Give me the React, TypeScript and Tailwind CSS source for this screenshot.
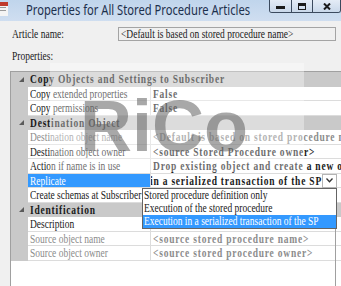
import React from 'react';

type Row =
  | { kind: 'cat'; label: string }
  | {
      kind: 'prop';
      name: string;
      value: string;
      nameGray?: boolean;
      valueGray?: boolean;
      valueBold?: boolean;
      selected?: boolean;
    };

const rows: Row[] = [
  { kind: 'cat', label: 'Copy Objects and Settings to Subscriber' },
  { kind: 'prop', name: 'Copy extended properties', value: 'False', valueBold: true },
  { kind: 'prop', name: 'Copy permissions', value: 'False', valueBold: true },
  { kind: 'cat', label: 'Destination Object' },
  {
    kind: 'prop',
    name: 'Destination object name',
    value: '<Default is based on stored procedure name>',
    nameGray: true,
    valueGray: true,
    valueBold: true,
  },
  { kind: 'prop', name: 'Destination object owner', value: '<source Stored Procedure owner>', valueBold: true },
  { kind: 'prop', name: 'Action if name is in use', value: 'Drop existing object and create a new one', valueBold: true },
  { kind: 'prop', name: 'Replicate', value: '', selected: true },
  { kind: 'prop', name: 'Create schemas at Subscriber', value: 'True', valueBold: true },
  { kind: 'cat', label: 'Identification' },
  { kind: 'prop', name: 'Description', value: '' },
  {
    kind: 'prop',
    name: 'Source object name',
    value: '<source stored procedure name>',
    nameGray: true,
    valueGray: true,
    valueBold: true,
  },
  {
    kind: 'prop',
    name: 'Source object owner',
    value: '<source stored procedure owner>',
    nameGray: true,
    valueGray: true,
    valueBold: true,
  },
];

const options = [
  'Stored procedure definition only',
  'Execution of the stored procedure',
  'Execution in a serialized transaction of the SP',
];

// the screenshot is squeezed sideways, so text is narrowed to match
const Narrow: React.FC<{ children: React.ReactNode; className?: string }> = ({ children, className = '' }) => (
  <span className={`inline-block origin-left scale-x-[0.79] whitespace-nowrap ${className}`}>{children}</span>
);

const Expander = () => (
  <svg width="5" height="5" viewBox="0 0 5 5" className="ml-[8px]">
    <polygon points="5,0 5,5 0,5" fill="#5a5a5a" />
  </svg>
);

export default function App() {
  return (
    <div className="relative w-[341px] h-[286px] overflow-hidden bg-[#f0f0f0] flex flex-col font-['Liberation_Serif',serif] text-[12px] text-[#1a1a1a]">
      {/* Title bar */}
      <div className="h-[21px] shrink-0 flex items-start bg-gradient-to-b from-[#c0d5ec] to-[#cfdef0]">
        <svg width="8" height="14" viewBox="0 0 8 14" className="mt-[2px] shrink-0">
          <rect x="0" y="0" width="8" height="14" fill="#f4f4f4" />
          <rect x="0" y="0" width="8" height="4" fill="#c0392b" />
          <rect x="0" y="5" width="6" height="1" fill="#9a9a9a" />
          <rect x="0" y="8" width="6" height="1" fill="#9a9a9a" />
        </svg>
        <div className="ml-[18px] w-[236px] shrink-0 h-[19px] flex items-center font-['Noto_Sans',sans-serif] text-[15px] text-[#1c2f4c] leading-none">
          <span className="inline-block origin-left scale-x-[0.745] whitespace-nowrap">
            Properties for All Stored Procedure Articles
          </span>
        </div>
        <div className="flex-1" />
        <div className="flex shrink-0 h-[13px] border border-t-0 border-[#3b4a5e] rounded-b-[3px] overflow-hidden">
          <div className="w-[22px] flex items-center justify-center bg-gradient-to-b from-[#e4ecf6] to-[#c9d8ea] border-r border-[#3b4a5e]">
            <div className="w-[9px] h-[3px] bg-[#1b1b1b] mt-[2px]" />
          </div>
          <div className="w-[21px] flex items-center justify-center bg-gradient-to-b from-[#e4ecf6] to-[#c9d8ea] border-r border-[#3b4a5e]">
            <div className="w-[8px] h-[7px] border border-t-[3px] border-[#1b1b1b]" />
          </div>
          <div className="w-[27px] flex items-center justify-center bg-gradient-to-b from-[#e4ecf6] to-[#c9d8ea]">
            <svg width="8" height="7" viewBox="0 0 8 7">
              <path d="M1 0.5 L7 6.5 M7 0.5 L1 6.5" stroke="#1b1b1b" strokeWidth="2" />
            </svg>
          </div>
        </div>
      </div>

      {/* Article name */}
      <div className="mt-[6px] flex items-center h-[14px] shrink-0">
        <div className="w-[118px] shrink-0 pl-[12px] leading-[14px]">
          <Narrow>Article name:</Narrow>
        </div>
        <div className="w-[218px] shrink-0 h-[14px] border border-[#a4a4a4] bg-[#f0f0f0] pl-[2px] leading-[12px] overflow-hidden">
          <Narrow>&lt;Default is based on stored procedure name&gt;</Narrow>
        </div>
      </div>

      <div className="mt-[9px] h-[13px] pl-[12px] leading-[13px] shrink-0">
        <Narrow>Properties:</Narrow>
      </div>

      {/* Property grid */}
      <div className="mt-[8px] ml-[10px] flex-1 flex flex-col bg-white border-l border-t border-[#a0a0a0]">
        {rows.map((r, i) =>
          r.kind === 'cat' ? (
            <div key={i} className="h-[14.5px] flex items-center bg-[#c9c9c9]">
              <div className="w-[19px] shrink-0 flex items-center">
                <Expander />
              </div>
              <Narrow className="font-bold tracking-[1px] leading-[14px]">{r.label}</Narrow>
            </div>
          ) : (
            <div key={i} className="h-[14.5px] flex">
              <div className="w-[17px] shrink-0 bg-[#c9c9c9]" />
              <div
                className={`w-[123px] shrink-0 pl-[2px] border-b border-r border-[#dcdcdc] leading-[14px] overflow-hidden ${
                  r.selected ? 'bg-[#3399ff] text-white' : r.nameGray ? 'text-[#8c8c8c]' : ''
                }`}
              >
                <Narrow>{r.name}</Narrow>
              </div>
              {r.selected ? (
                <div className="flex-1 flex border-b border-[#dcdcdc]">
                  <div className="w-[171px] shrink-0 flex justify-end overflow-hidden leading-[14px] font-bold">
                    <span className="inline-block origin-right scale-x-[0.79] tracking-[1px] whitespace-nowrap">
                      Execution in a serialized transaction of the SP
                    </span>
                  </div>
                  <div className="w-[15px] shrink-0 h-[14px] bg-white border border-[#b4b4b4] flex items-center justify-center">
                    <svg width="7" height="5" viewBox="0 0 7 5">
                      <path d="M0.5 0.5 L3.5 3.8 L6.5 0.5" stroke="#333" strokeWidth="1.3" fill="none" />
                    </svg>
                  </div>
                </div>
              ) : (
                <div
                  className={`flex-1 pl-[2px] border-b border-[#dcdcdc] leading-[14px] overflow-hidden ${
                    r.valueBold ? 'font-bold' : ''
                  } ${r.valueGray ? 'text-[#8c8c8c]' : ''}`}
                >
                  <Narrow className={r.valueBold ? 'tracking-[1px]' : ''}>{r.value}</Narrow>
                </div>
              )}
            </div>
          )
        )}
      </div>

      {/* Watermark */}
      <div className="absolute left-[50px] top-[63px] w-[254px] h-[109px] bg-white/35 pointer-events-none" />
      <div className="absolute left-[80px] top-[90px] font-['Liberation_Sans',sans-serif] font-bold text-[72px] leading-none text-[#606060]/55 pointer-events-none">
        RiCo
      </div>

      {/* right edge line of the grid */}
      <div className="absolute left-[335px] top-[189px] w-px h-[97px] bg-[#a0a0a0]" />

      {/* Open dropdown list */}
      <div className="absolute left-[142px] top-[188px] w-[195px] bg-white border border-[#646464] flex flex-col">
        {options.map((o, i) => (
          <div
            key={o}
            className={`h-[13px] pl-[1px] leading-[13px] overflow-hidden ${i === 2 ? 'bg-[#3399ff] text-white' : ''}`}
          >
            <Narrow>{o}</Narrow>
          </div>
        ))}
      </div>
    </div>
  );
}
